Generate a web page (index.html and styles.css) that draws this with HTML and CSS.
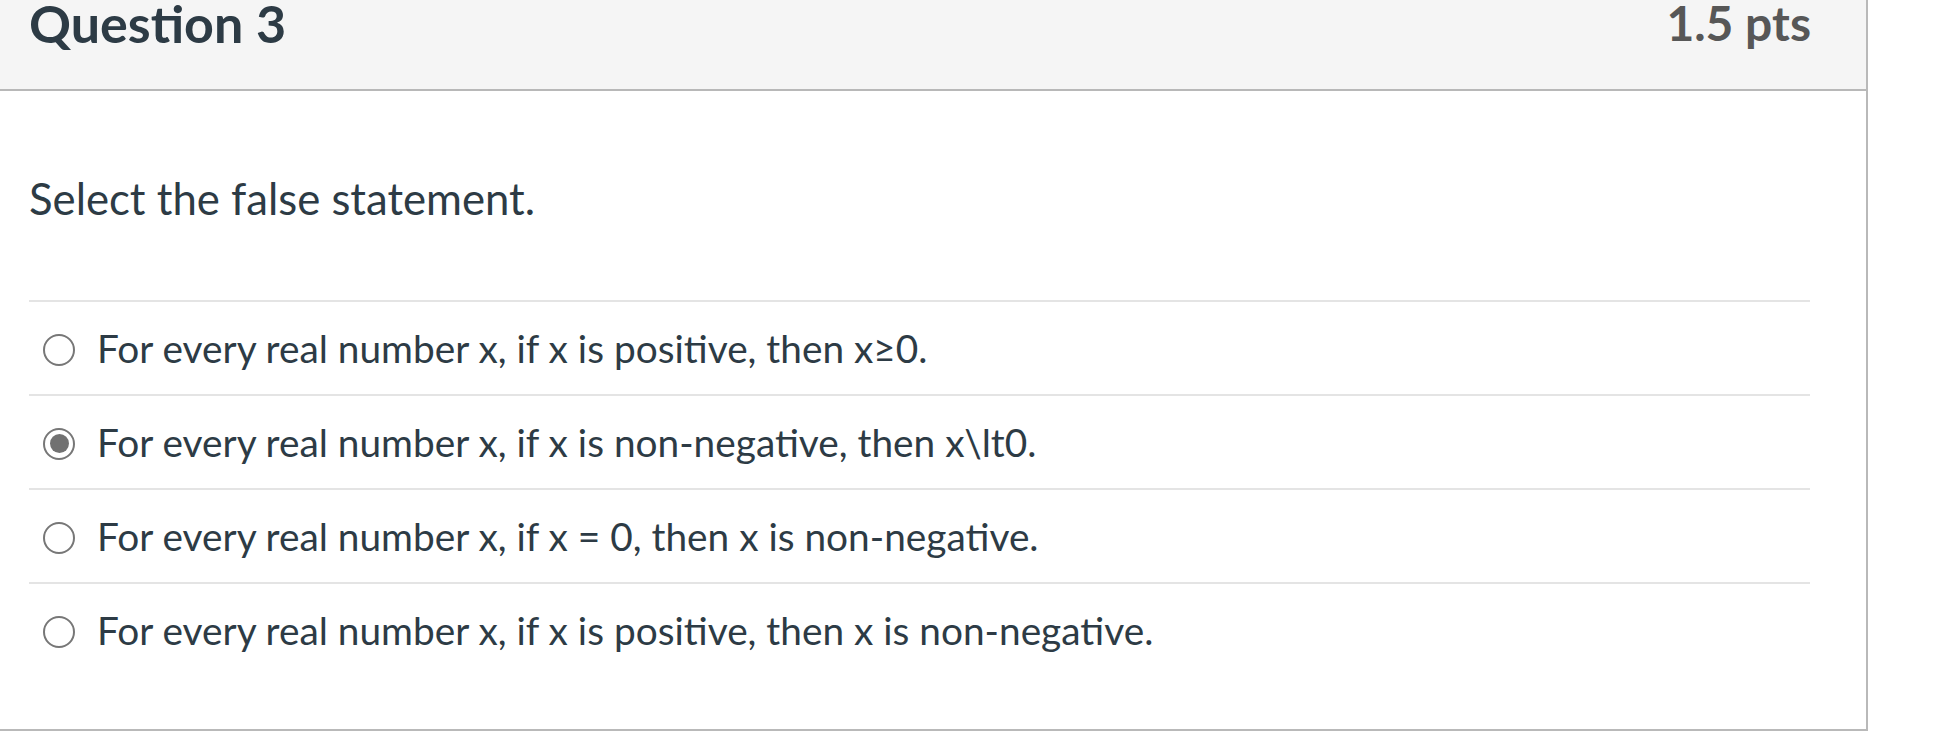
FILE: index.html
```html
<!DOCTYPE html>
<html lang="en">
<head>
<meta charset="utf-8">
<title>Question 3</title>
<link rel="stylesheet" href="styles.css">
</head>
<body>
<div class="question">
  <div class="question-header">
    <h2 class="question-title">Question 3</h2>
    <div class="question-points">1.5 pts</div>
  </div>
  <div class="question-body">
    <p class="question-text">Select the false statement.</p>
    <div class="answers">
      <label class="answer">
        <span class="radio"></span>
        <span class="answer-text">For every real number x, if x is positive, then x≥0.</span>
      </label>
      <label class="answer">
        <span class="radio checked"></span>
        <span class="answer-text">For every real number x, if x is non-negative, then x\lt0.</span>
      </label>
      <label class="answer">
        <span class="radio"></span>
        <span class="answer-text">For every real number x, if x = 0, then x is non-negative.</span>
      </label>
      <label class="answer">
        <span class="radio"></span>
        <span class="answer-text">For every real number x, if x is positive, then x is non-negative.</span>
      </label>
    </div>
  </div>
</div>
</body>
</html>
```

FILE: styles.css
```css
html, body {
  margin: 0;
  padding: 0;
  background: #ffffff;
}

body {
  font-family: Lato, "Open Sans", "Liberation Sans", sans-serif;
  color: #2d3b45;
}

.question {
  width: 1868px;
  height: 731px;
  box-sizing: border-box;
  border-right: 2px solid #b9b9b9;
  border-bottom: 2px solid #b9b9b9;
  display: flex;
  flex-direction: column;
}

.question-header {
  height: 91px;
  box-sizing: border-box;
  background: #f5f5f5;
  border-bottom: 2px solid #b8b8b8;
  padding: 0 55px 0 29px;
  display: flex;
  justify-content: space-between;
  align-items: flex-start;
}

.question-title {
  margin: 0;
  font-size: 52px;
  font-weight: 700;
  line-height: 46px;
  color: #2d3b45;
}

.question-points {
  font-size: 48px;
  font-weight: 700;
  line-height: 46px;
  color: #575757;
}

.question-body {
  padding: 77px 56px 0 29px;
}

.question-text {
  margin: 0 0 72px;
  font-size: 43.7px;
  line-height: 60px;
}

.answers {
  display: flex;
  flex-direction: column;
}

.answer {
  height: 94px;
  box-sizing: border-box;
  border-top: 2px solid #e4e4e4;
  display: flex;
  align-items: center;
  gap: 22px;
  padding-left: 14px;
}

.radio {
  width: 32px;
  height: 32px;
  box-sizing: border-box;
  border: 2.5px solid #777777;
  border-radius: 50%;
  flex: none;
  margin-top: 3px;
  display: flex;
  align-items: center;
  justify-content: center;
}

.radio.checked::after {
  content: "";
  width: 19px;
  height: 19px;
  border-radius: 50%;
  background: #717171;
}

.answer-text {
  font-size: 38.8px;
  line-height: 46px;
}
```
